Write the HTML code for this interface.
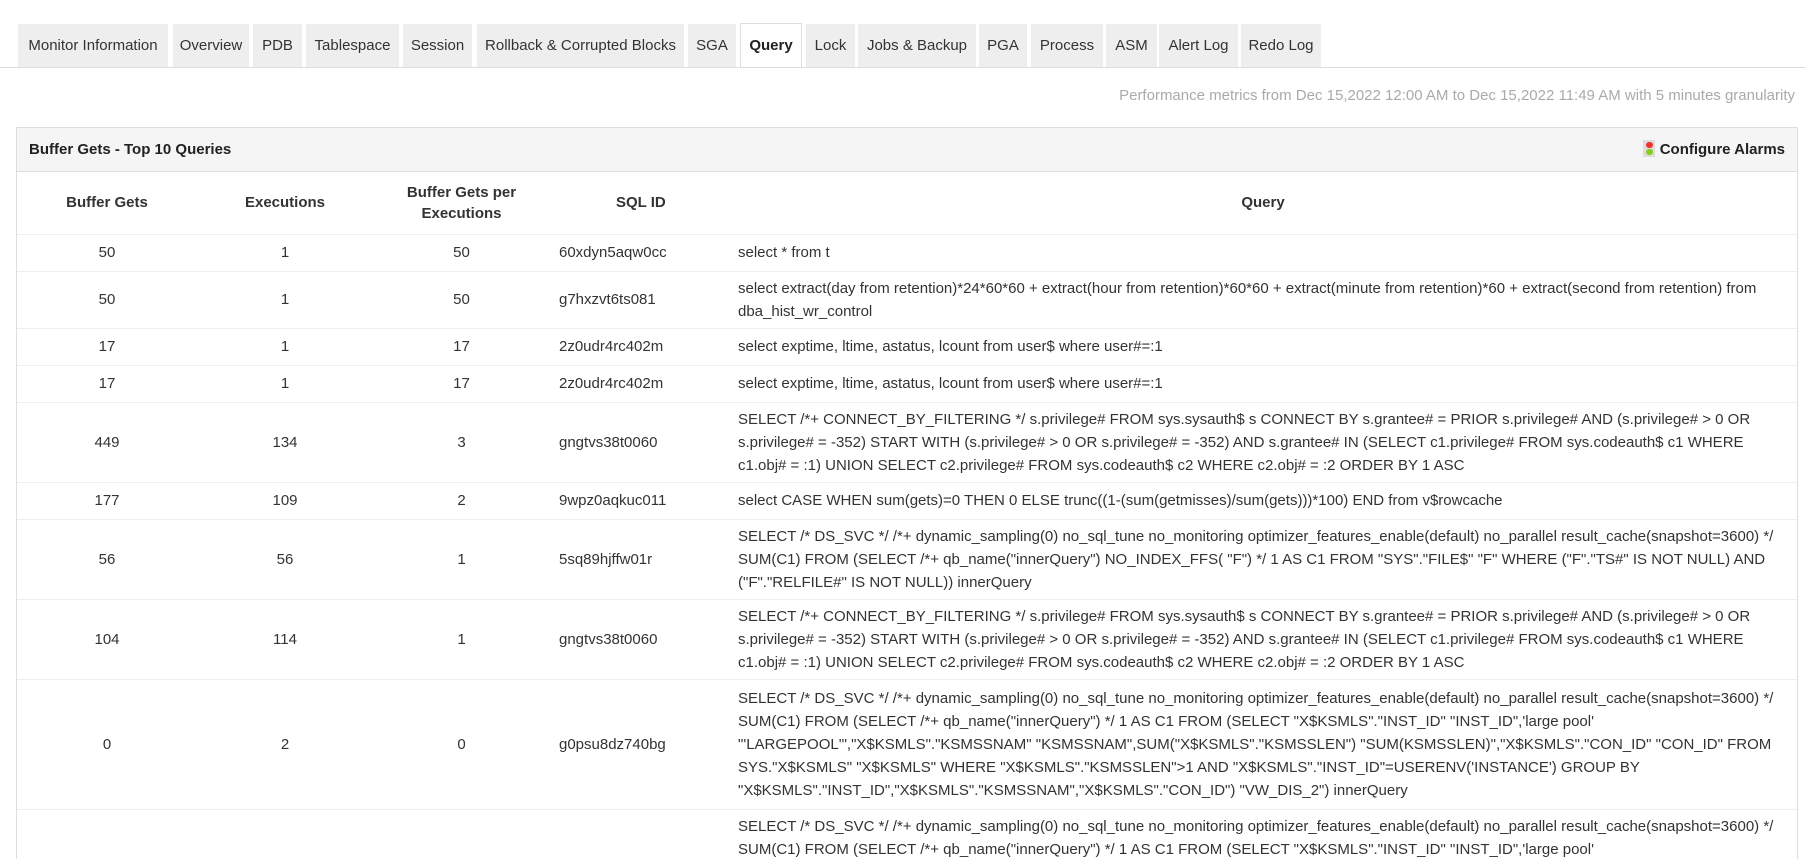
<!DOCTYPE html>
<html style="height:859px;overflow:hidden"><head><meta charset="utf-8"><style>
*{box-sizing:border-box}
body{margin:0;width:1806px;height:859px;overflow:hidden;background:#fff;font-family:"Liberation Sans",Arial,sans-serif;color:#333;font-size:15px;position:relative}
.tab{position:absolute;top:24px;height:43px;line-height:43px;background:#eee;font-size:15px;color:#333;white-space:nowrap;text-align:center}
.tab.act{background:#fff;border:1px solid #ddd;border-bottom:none;font-weight:bold;height:44px;color:#222;top:23px}
.line{position:absolute;top:67px;left:0;width:1806px;height:1px;background:#ddd}
.meta{position:absolute;top:87px;right:11px;color:#aaa;font-size:15px}
.panel{position:absolute;left:16px;top:127px;width:1782px;height:760px;border:1px solid #ddd;border-bottom:none;overflow:hidden}
.ph{height:44px;background:#f5f5f5;border-bottom:1px solid #ddd;line-height:43px;padding-left:12px;font-weight:bold;color:#222;position:relative}
.ca{position:absolute;right:12px;top:0}
.tl{display:inline-block;width:12px;height:17px;background:#ddd;vertical-align:-3px;margin-right:5px;position:relative}
.tl:before{content:"";position:absolute;left:3px;top:2px;width:7px;height:6px;border-radius:3px;background:#e33}
.tl:after{content:"";position:absolute;left:3px;top:9px;width:7px;height:6px;border-radius:3px;background:#8c2}
table{border-collapse:collapse;width:1780px;table-layout:fixed}
th{height:62px;font-weight:bold;text-align:center;line-height:21px;color:#333}
td{line-height:23px;padding:5px 9px;border-top:1px solid #eee;white-space:nowrap;vertical-align:middle}
tr.s td{height:37px}
tr.b td{padding-top:7px;padding-bottom:7px}
td.c{text-align:center}
</style></head><body>
<div class="tab" style="left:18px;width:150px">Monitor Information</div>
<div class="tab" style="left:173px;width:76px">Overview</div>
<div class="tab" style="left:253px;width:49px">PDB</div>
<div class="tab" style="left:306px;width:93px">Tablespace</div>
<div class="tab" style="left:403px;width:69px">Session</div>
<div class="tab" style="left:477px;width:207px">Rollback &amp; Corrupted Blocks</div>
<div class="tab" style="left:688px;width:48px">SGA</div>
<div class="tab act" style="left:740px;width:62px">Query</div>
<div class="tab" style="left:806px;width:49px">Lock</div>
<div class="tab" style="left:858px;width:118px">Jobs &amp; Backup</div>
<div class="tab" style="left:979px;width:48px">PGA</div>
<div class="tab" style="left:1031px;width:72px">Process</div>
<div class="tab" style="left:1106px;width:51px">ASM</div>
<div class="tab" style="left:1159px;width:79px">Alert Log</div>
<div class="tab" style="left:1241px;width:80px">Redo Log</div>
<div class="line"></div>
<div class="meta">Performance metrics from Dec 15,2022 12:00 AM to Dec 15,2022 11:49 AM with 5 minutes granularity</div>
<div class="panel">
<div class="ph">Buffer Gets - Top 10 Queries<span class="ca"><span class="tl"></span>Configure Alarms</span></div>
<table>
<colgroup><col style="width:180px"><col style="width:176px"><col style="width:177px"><col style="width:179px"><col></colgroup>
<tr><th>Buffer Gets</th><th>Executions</th><th>Buffer Gets per<br>Executions</th><th style="text-align:left;padding-left:66px">SQL ID</th><th>Query</th></tr>
<tr class="s"><td class="c">50</td><td class="c">1</td><td class="c">50</td><td>60xdyn5aqw0cc</td><td>select * from t</td></tr>
<tr><td class="c">50</td><td class="c">1</td><td class="c">50</td><td>g7hxzvt6ts081</td><td>select extract(day from retention)*24*60*60 + extract(hour from retention)*60*60 + extract(minute from retention)*60 + extract(second from retention) from<br>dba_hist_wr_control</td></tr>
<tr class="s"><td class="c">17</td><td class="c">1</td><td class="c">17</td><td>2z0udr4rc402m</td><td>select exptime, ltime, astatus, lcount from user$ where user#=:1</td></tr>
<tr class="s"><td class="c">17</td><td class="c">1</td><td class="c">17</td><td>2z0udr4rc402m</td><td>select exptime, ltime, astatus, lcount from user$ where user#=:1</td></tr>
<tr><td class="c">449</td><td class="c">134</td><td class="c">3</td><td>gngtvs38t0060</td><td>SELECT /*+ CONNECT_BY_FILTERING */ s.privilege# FROM sys.sysauth$ s CONNECT BY s.grantee# = PRIOR s.privilege# AND (s.privilege# &gt; 0 OR<br>s.privilege# = -352) START WITH (s.privilege# &gt; 0 OR s.privilege# = -352) AND s.grantee# IN (SELECT c1.privilege# FROM sys.codeauth$ c1 WHERE<br>c1.obj# = :1) UNION SELECT c2.privilege# FROM sys.codeauth$ c2 WHERE c2.obj# = :2 ORDER BY 1 ASC</td></tr>
<tr class="s"><td class="c">177</td><td class="c">109</td><td class="c">2</td><td>9wpz0aqkuc011</td><td>select CASE WHEN sum(gets)=0 THEN 0 ELSE trunc((1-(sum(getmisses)/sum(gets)))*100) END from v$rowcache</td></tr>
<tr><td class="c">56</td><td class="c">56</td><td class="c">1</td><td>5sq89hjffw01r</td><td>SELECT /* DS_SVC */ /*+ dynamic_sampling(0) no_sql_tune no_monitoring optimizer_features_enable(default) no_parallel result_cache(snapshot=3600) */<br>SUM(C1) FROM (SELECT /*+ qb_name("innerQuery") NO_INDEX_FFS( "F") */ 1 AS C1 FROM "SYS"."FILE$" "F" WHERE ("F"."TS#" IS NOT NULL) AND<br>("F"."RELFILE#" IS NOT NULL)) innerQuery</td></tr>
<tr><td class="c">104</td><td class="c">114</td><td class="c">1</td><td>gngtvs38t0060</td><td>SELECT /*+ CONNECT_BY_FILTERING */ s.privilege# FROM sys.sysauth$ s CONNECT BY s.grantee# = PRIOR s.privilege# AND (s.privilege# &gt; 0 OR<br>s.privilege# = -352) START WITH (s.privilege# &gt; 0 OR s.privilege# = -352) AND s.grantee# IN (SELECT c1.privilege# FROM sys.codeauth$ c1 WHERE<br>c1.obj# = :1) UNION SELECT c2.privilege# FROM sys.codeauth$ c2 WHERE c2.obj# = :2 ORDER BY 1 ASC</td></tr>
<tr class="b"><td class="c">0</td><td class="c">2</td><td class="c">0</td><td>g0psu8dz740bg</td><td>SELECT /* DS_SVC */ /*+ dynamic_sampling(0) no_sql_tune no_monitoring optimizer_features_enable(default) no_parallel result_cache(snapshot=3600) */<br>SUM(C1) FROM (SELECT /*+ qb_name("innerQuery") */ 1 AS C1 FROM (SELECT "X$KSMLS"."INST_ID" "INST_ID",'large pool'<br>"'LARGEPOOL'","X$KSMLS"."KSMSSNAM" "KSMSSNAM",SUM("X$KSMLS"."KSMSSLEN") "SUM(KSMSSLEN)","X$KSMLS"."CON_ID" "CON_ID" FROM<br>SYS."X$KSMLS" "X$KSMLS" WHERE "X$KSMLS"."KSMSSLEN"&gt;1 AND "X$KSMLS"."INST_ID"=USERENV('INSTANCE') GROUP BY<br>"X$KSMLS"."INST_ID","X$KSMLS"."KSMSSNAM","X$KSMLS"."CON_ID") "VW_DIS_2") innerQuery</td></tr>
<tr><td class="c"></td><td class="c"></td><td class="c"></td><td></td><td style="vertical-align:top">SELECT /* DS_SVC */ /*+ dynamic_sampling(0) no_sql_tune no_monitoring optimizer_features_enable(default) no_parallel result_cache(snapshot=3600) */<br>SUM(C1) FROM (SELECT /*+ qb_name("innerQuery") */ 1 AS C1 FROM (SELECT "X$KSMLS"."INST_ID" "INST_ID",'large pool'<br>"'LARGEPOOL'","X$KSMLS"."KSMSSNAM" "KSMSSNAM"</td></tr>
</table>
</div>
</body></html>
